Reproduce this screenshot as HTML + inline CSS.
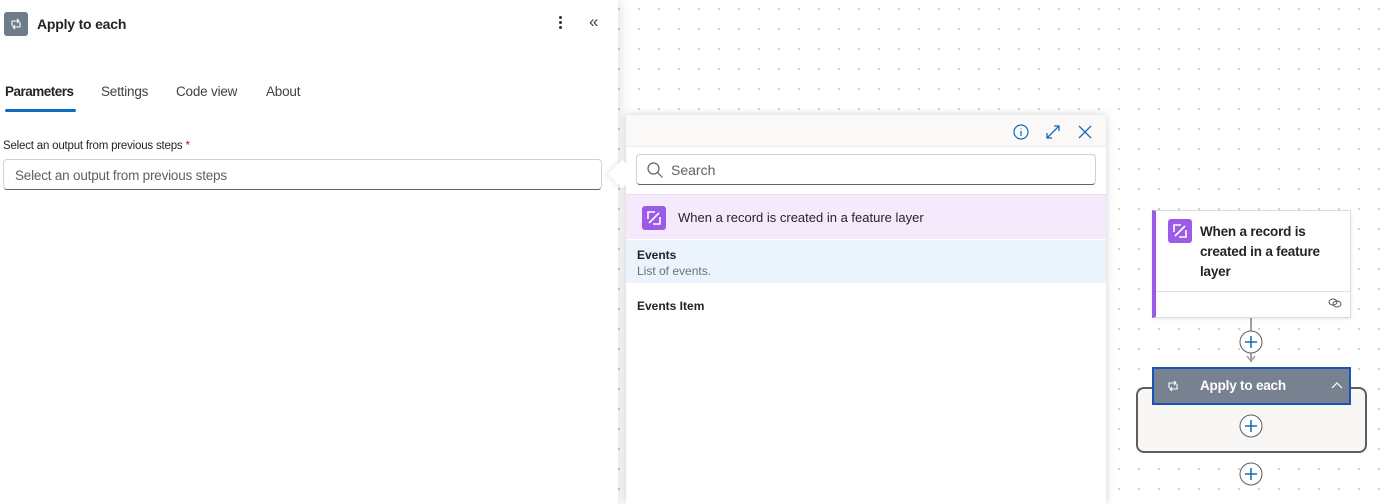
<!DOCTYPE html>
<html><head><meta charset="utf-8"><style>
*{box-sizing:border-box;margin:0;padding:0}
body{width:1389px;height:504px;overflow:hidden;position:relative;font-family:"Liberation Sans",sans-serif;background:#fff;
background-image:radial-gradient(circle,#c4c4c4 0.8px,transparent 1.1px);background-size:20px 20px;background-position:9px -1px}
.abs{position:absolute}
#left{left:0;top:0;width:618px;height:504px;background:#fff;box-shadow:2px 0 12px rgba(0,0,0,.12)}
.t{font-size:13.5px;color:#242424;letter-spacing:-0.2px}
</style></head><body>
<div id="left" class="abs">
  <div class="abs" style="left:4px;top:12px;width:24px;height:24px;background:#6f7c8c;border-radius:3px"></div>
  <svg class="abs" style="left:10px;top:18px" width="12" height="12" viewBox="0 0 12 12" fill="none" stroke="#fff" stroke-width="1.1"><path d="M2 8V3h7M7 1l2 2-2 2M10 4v5H3M5 11l-2-2 2-2"/></svg>
  <div class="abs" style="left:37px;top:16px;font-size:14px;font-weight:bold;color:#242424;letter-spacing:-0.2px">Apply to each</div>
  <div class="abs" style="left:559px;top:16px;width:3px;height:3px;background:#333;border-radius:50%;box-shadow:0 5px 0 #333,0 10px 0 #333"></div>
  <div class="abs" style="left:589px;top:12px;font-size:17px;color:#444">«</div>
  <div class="abs t" style="left:5px;top:84px;font-weight:bold;letter-spacing:-0.5px">Parameters</div>
  <div class="abs t" style="left:101px;top:84px;color:#424242">Settings</div>
  <div class="abs t" style="left:176px;top:84px;color:#424242">Code view</div>
  <div class="abs t" style="left:266px;top:84px;color:#424242">About</div>
  <div class="abs" style="left:5px;top:109px;width:71px;height:3px;background:#0f6cbd;border-radius:2px"></div>
  <div class="abs" style="left:3px;top:140px;font-size:11.5px;color:#242424;letter-spacing:-0.2px">Select an output from previous steps <span style="color:#c50f1f">*</span></div>
  <div class="abs" style="left:3px;top:159px;width:599px;height:31px;border:1px solid #d1d1d1;border-bottom-color:#616161;border-radius:4px;padding:8px 11px;font-size:13.5px;color:#616161;letter-spacing:-0.2px">Select an output from previous steps</div>
</div>
<!-- popup -->
<div class="abs" style="left:626px;top:115px;width:480px;height:389px;background:#fff;box-shadow:0 0 8px rgba(0,0,0,.18)">
  <div class="abs" style="left:0;top:0;width:480px;height:32px;background:#faf9f8;border-bottom:1px solid #edebe9"></div>
  <svg class="abs" style="left:386px;top:8px" width="18" height="18" viewBox="0 0 18 18" fill="none" stroke="#0f6cbd" stroke-width="1.2"><circle cx="9" cy="9" r="7"/><path d="M9 8v5M9 5.5v.8"/></svg>
  <svg class="abs" style="left:418px;top:8px" width="18" height="18" viewBox="0 0 18 18" fill="none" stroke="#0f6cbd" stroke-width="1.3"><path d="M3 15L15 3M10 3h5v5M3 10v5h5"/></svg>
  <svg class="abs" style="left:451px;top:9px" width="16" height="16" viewBox="0 0 16 16" fill="none" stroke="#0f6cbd" stroke-width="1.3"><path d="M2 2l12 12M14 2L2 14"/></svg>
  <div class="abs" style="left:10px;top:39px;width:460px;height:31px;border:1px solid #d1d1d1;border-bottom-color:#616161;border-radius:4px"></div>
  <svg class="abs" style="left:20px;top:46px" width="18" height="18" viewBox="0 0 18 18" fill="none" stroke="#616161" stroke-width="1.2"><circle cx="7.5" cy="7.5" r="5.5"/><path d="M11.5 11.5l5 5"/></svg>
  <div class="abs" style="left:45px;top:47px;font-size:14px;color:#616161">Search</div>
  <div class="abs" style="left:0;top:79px;width:480px;height:45px;background:#f4eafc;border-top:1px solid #e8def0"></div>
  <div class="abs" style="left:16px;top:91px;width:24px;height:24px;background:#9c5ae8;border-radius:3px"></div>
  <svg class="abs" style="left:18px;top:93px" width="20" height="20" viewBox="0 0 20 20" fill="none" stroke="#fff" stroke-width="1.6"><path d="M4 11V4h7M5 15L15 5M16 9v7H9"/></svg>
  <div class="abs" style="left:52px;top:95px;font-size:13px;color:#242424">When a record is created in a feature layer</div>
  <div class="abs" style="left:0;top:125px;width:480px;height:43px;background:#ebf3fc"></div>
  <div class="abs" style="left:11px;top:133px;font-size:12px;font-weight:bold;color:#242424">Events</div>
  <div class="abs" style="left:11px;top:149px;font-size:12px;color:#707070">List of events.</div>
  <div class="abs" style="left:11px;top:184px;font-size:12px;font-weight:bold;color:#242424">Events Item</div>
</div>
<div class="abs" style="left:612px;top:164px;width:20px;height:20px;background:#fff;transform:rotate(45deg);box-shadow:-2px 2px 4px rgba(0,0,0,.08)"></div>
<!-- flow -->
<div class="abs" style="left:1250px;top:318px;width:2px;height:44px;background:#a0a0a0"></div>
<div class="abs" style="left:1152px;top:210px;width:199px;height:108px;background:#fff;border:1px solid #dcdcdc;border-left:4px solid #9c5ae8;box-shadow:0 1px 3px rgba(0,0,0,.1)"></div>
<div class="abs" style="left:1168px;top:219px;width:24px;height:24px;background:#9c5ae8;border-radius:3px"></div>
<svg class="abs" style="left:1170px;top:221px" width="20" height="20" viewBox="0 0 20 20" fill="none" stroke="#fff" stroke-width="1.6"><path d="M4 11V4h7M5 15L15 5M16 9v7H9"/></svg>
<div class="abs" style="left:1200px;top:222px;font-size:13.5px;font-weight:bold;color:#242424;line-height:20px;width:140px;letter-spacing:-0.2px">When a record is created in a feature layer</div>
<div class="abs" style="left:1156px;top:291px;width:194px;height:1px;background:#e1e1e1"></div>
<svg class="abs" style="left:1328px;top:298px" width="14" height="10" viewBox="0 0 14 10" fill="none" stroke="#555" stroke-width="1"><ellipse cx="5" cy="4" rx="4" ry="3"/><ellipse cx="9" cy="6" rx="4" ry="3"/></svg>
<div class="abs" style="left:1136px;top:387px;width:231px;height:66px;background:#f8f7f5;border:2px solid #605e5c;border-radius:8px"></div>
<div class="abs" style="left:1152px;top:367px;width:199px;height:38px;background:#77818f;border:2px solid #1853b5"></div>
<svg class="abs" style="left:1167px;top:380px" width="12" height="12" viewBox="0 0 12 12" fill="none" stroke="#fff" stroke-width="1.1"><path d="M2 8V3h7M7 1l2 2-2 2M10 4v5H3M5 11l-2-2 2-2"/></svg>
<div class="abs" style="left:1200px;top:378px;font-size:13.5px;font-weight:bold;color:#fff;letter-spacing:-0.2px">Apply to each</div>
<svg class="abs" style="left:1331px;top:381px" width="12" height="8" viewBox="0 0 12 8" fill="none" stroke="#fff" stroke-width="1.2"><path d="M1 7l5-5 5 5"/></svg>
<svg class="abs" style="left:1246px;top:355px" width="10" height="8"><path d="M1 1l4 5 4-5" fill="none" stroke="#a0a0a0" stroke-width="1.5"/></svg>
<svg class="abs" style="left:0;top:0" width="1389" height="504" fill="#fff" stroke="#605e5c" stroke-width="1">
<g><circle cx="1251" cy="342" r="11"/><circle cx="1251" cy="426" r="11"/><circle cx="1251" cy="474" r="11"/></g>
<g stroke="#0f6cbd" stroke-width="1.5"><path d="M1245 342h12M1251 336v12M1245 426h12M1251 420v12M1245 474h12M1251 468v12"/></g>
</svg>
</body></html>
